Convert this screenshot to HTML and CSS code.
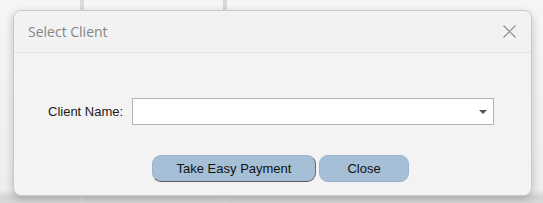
FILE: index.html
```html
<!DOCTYPE html>
<html>
<head>
<meta charset="utf-8">
<link rel="stylesheet" href="styles.css">
</head>
<body>
<div class="desk">
  <div class="dialog">
    <div class="titlebar">
      <span class="title">Select Client</span>
      <svg class="close-x" width="13" height="13" viewBox="0 0 13 13"><path d="M0.5 0.5 L12.5 12.5 M12.5 0.5 L0.5 12.5" stroke="#8a8a8a" stroke-width="1.1" fill="none"/></svg>
    </div>
    <div class="content">
      <div class="row">
        <span class="label">Client Name:</span>
        <div class="combo">
          <svg class="arrow" width="8" height="4" viewBox="0 0 8 4"><path d="M0 0 H8 L4 4 Z" fill="#555"/></svg>
        </div>
      </div>
      <div class="buttons">
        <button class="btn btn-default">Take Easy Payment</button>
        <button class="btn btn-close">Close</button>
      </div>
    </div>
  </div>
</div>
</body>
</html>
```
FILE: styles.css
```css
html, body {
  margin: 0;
  padding: 0;
}
body {
  width: 543px;
  height: 203px;
  overflow: hidden;
  background:
    linear-gradient(90deg, transparent 80px, #dcdcdc 80px, #dcdcdc 84px, transparent 84px, transparent 223px, #d9d9d9 223px, #d9d9d9 227px, transparent 227px),
    linear-gradient(180deg, #f6f6f6 0, #eeeeee 190px, #d4d4d4 197px, #d8d8d8 203px);
}
.desk {
  padding: 10px 11px 0 13px;
}
.dialog {
  width: 517px;
  height: 184px;
  background: #f3f3f3;
  border: 1px solid #c9c9c9;
  border-radius: 8px;
  box-shadow: 0 3px 10px rgba(0, 0, 0, 0.22);
  display: flex;
  flex-direction: column;
}
.titlebar {
  height: 41px;
  border-bottom: 1px solid #e3e3e3;
  background: #f2f2f2;
  border-radius: 8px 8px 0 0;
  display: flex;
  align-items: center;
  justify-content: space-between;
  padding: 0 15px 0 14px;
}
.title {
  font-family: "Open Sans", "Noto Sans", sans-serif;
  font-size: 14px;
  color: #858585;
}
.close-x {
  display: block;
}
.content {
  padding-top: 45px;
  font-family: "Liberation Sans", Arial, sans-serif;
  font-size: 13px;
  color: #1a1a1a;
}
.row {
  display: flex;
  align-items: center;
  padding-left: 34px;
}
.label {
  width: 77px;
}
.combo {
  width: 354px;
  height: 25px;
  margin-left: 7px;
  background: #ffffff;
  border: 1px solid #b4b4b4;
  display: flex;
  align-items: center;
  justify-content: flex-end;
  padding-right: 6px;
}
.arrow {
  display: block;
}
.buttons {
  display: flex;
  gap: 3px;
  padding-left: 138px;
  margin-top: 30px;
}
.btn {
  height: 27px;
  font-family: "Liberation Sans", Arial, sans-serif;
  font-size: 13px;
  color: #111;
  background: #a4bfd6;
  border: 1px solid #98b3ca;
  border-radius: 9px;
  padding: 0;
}
.btn-default {
  width: 164px;
  border-bottom-color: #5c5c5c;
  border-right-color: #6a6a6a;
}
.btn-close {
  width: 90px;
}
```
